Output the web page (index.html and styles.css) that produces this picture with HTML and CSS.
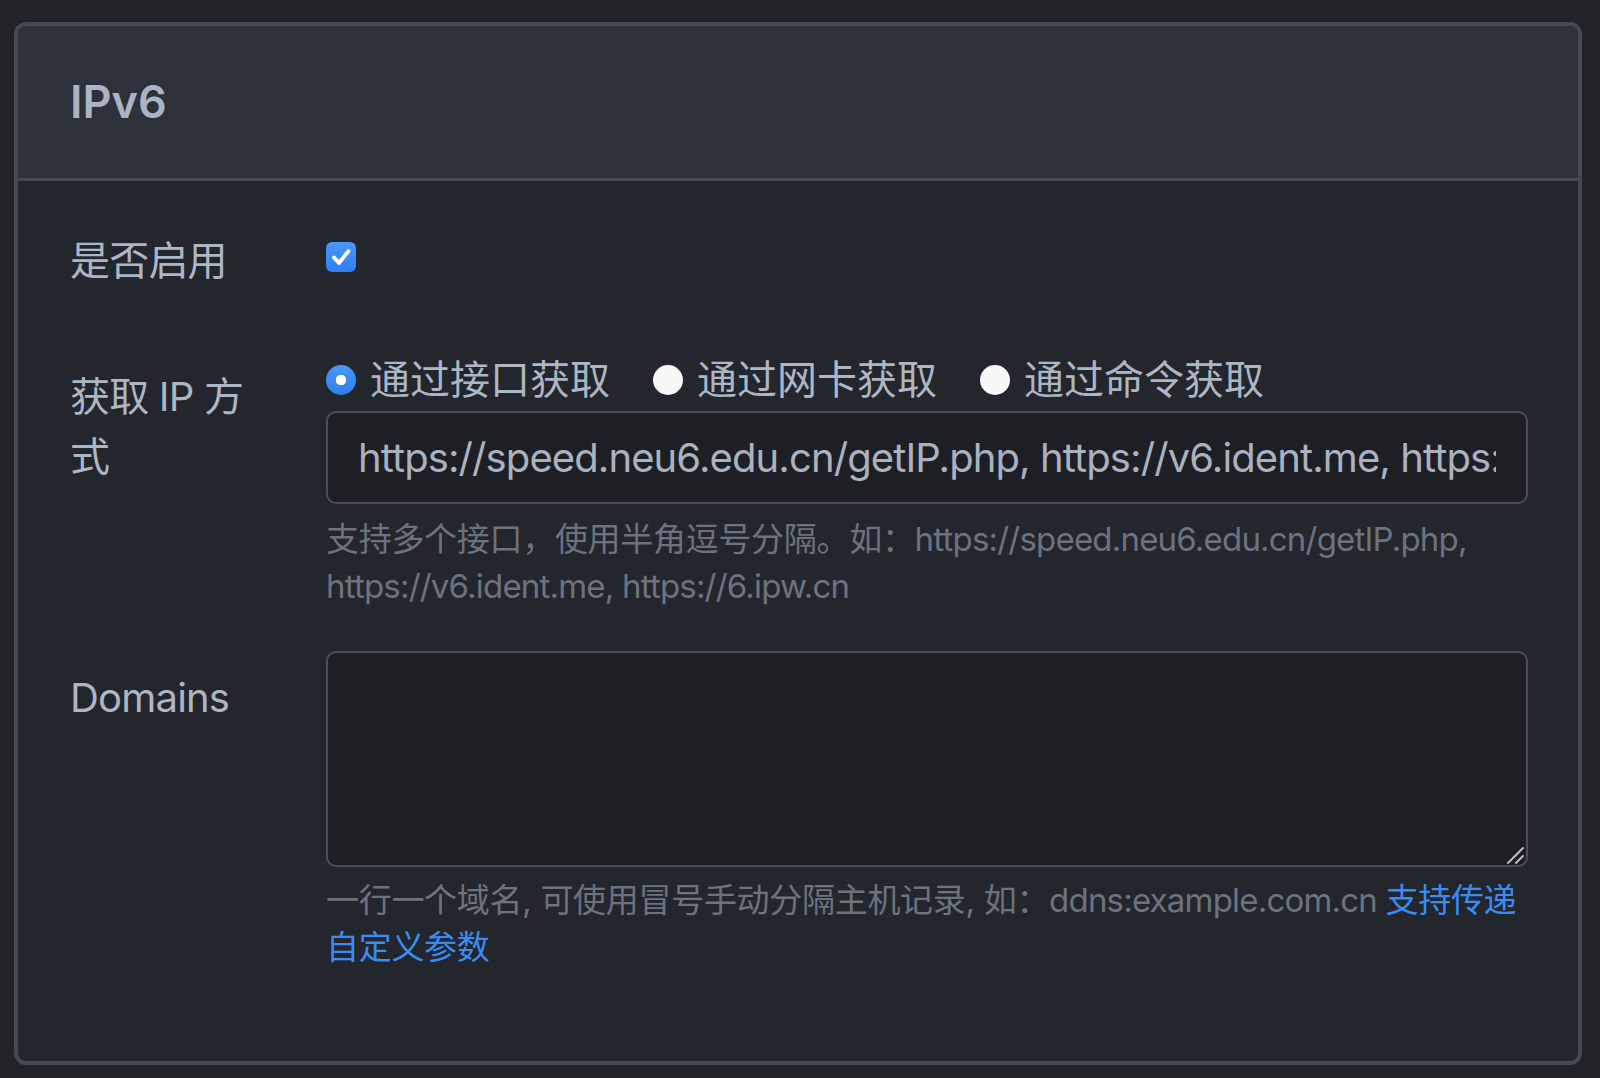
FILE: index.html
```html
<!DOCTYPE html>
<html lang="zh-CN">
<head>
<meta charset="utf-8">
<title>IPv6</title>
<link rel="stylesheet" href="styles.css">
</head>
<body>
<div class="page">
  <div class="card">
    <div class="card-header"><h5 class="card-title">IPv6</h5></div>
    <div class="card-body">
      <div class="row row-enable">
        <label class="col-label">是否启用</label>
        <div class="col-ctrl">
          <span class="checkbox"><svg viewBox="0 0 30 30" width="30" height="30"><path d="M8 15.5 L13 21 L22.5 9" fill="none" stroke="#fff" stroke-width="3.8" stroke-linecap="round" stroke-linejoin="round"/></svg></span>
        </div>
      </div>
      <div class="row row-ip">
        <label class="col-label">获取 IP 方式</label>
        <div class="col-ctrl">
          <div class="radios">
            <label class="radio"><span class="dot checked"></span>通过接口获取</label>
            <label class="radio"><span class="dot"></span>通过网卡获取</label>
            <label class="radio"><span class="dot"></span>通过命令获取</label>
          </div>
          <input class="input" type="text" value="https://speed.neu6.edu.cn/getIP.php, https://v6.ident.me, https://6.ipw.cn">
          <div class="hint"><span class="cjk">支持多个接口，使用半角逗号分隔。如：</span>https://speed.neu6.edu.cn/getIP.php, https://v6.ident.me, https://6.ipw.cn</div>
        </div>
      </div>
      <div class="row row-domains">
        <label class="col-label">Domains</label>
        <div class="col-ctrl">
          <div class="textarea-wrap">
            <textarea class="textarea"></textarea>
            <svg class="grip" viewBox="0 0 20 20" width="20" height="20"><path d="M3 18 L18 3 M11 18 L18 11" stroke="#b9bcc2" stroke-width="2" stroke-linecap="round" fill="none"/></svg>
          </div>
          <div class="hint hint-domains"><span class="cjk">一行一个域名, 可使用冒号手动分隔主机记录, 如：</span>ddns:example.com.cn <a class="link cjk" href="#">支持传递自定义参数</a></div>
        </div>
      </div>
    </div>
  </div>
</div>
</body>
</html>
```

FILE: styles.css
```css
html, body {
  margin: 0;
  padding: 0;
  background: #212329;
}
body {
  font-family: "Inter", "Noto Sans CJK SC", sans-serif;
  font-size: 40px;
  line-height: 1.5;
  color: #adb6c3;
}
.page {
  padding: 22px 18px 13px 14px;
}
.card {
  box-sizing: border-box;
  height: 1043px;
  border: 4px solid #454952;
  border-radius: 12px;
  background: #23262d;
  overflow: hidden;
}
.card-header {
  box-sizing: border-box;
  height: 155px;
  background: #2d3139;
  border-bottom: 3px solid #454952;
  padding-left: 52px;
  display: flex;
  align-items: center;
}
.card-title {
  margin: 0;
  font-size: 45px;
  font-weight: 600;
  line-height: 1.2;
  color: #aab4c2;
}
.card-body {
  padding: 33px 50px 0 52px;
}
.row {
  display: grid;
  grid-template-columns: 200px 1fr;
  column-gap: 56px;
}
.col-label {
  padding-top: 17px;
  line-height: 60px;
  color: #adb6c3;
  letter-spacing: -0.8px;
}
.row-enable .col-ctrl {
  padding-top: 28px;
}
.row-ip {
  margin-top: 59px;
}
.row-domains {
  margin-top: 41px;
}
.checkbox {
  display: block;
  width: 30px;
  height: 30px;
  border-radius: 6px;
  background: linear-gradient(#4a95f8, #2f7ff0);
}
.checkbox svg {
  display: block;
}
.radios {
  display: flex;
  height: 60px;
  align-items: center;
  gap: 43px;
}
.radio {
  display: flex;
  align-items: center;
  gap: 14px;
  color: #adb6c3;
}
.dot {
  box-sizing: border-box;
  width: 30px;
  height: 30px;
  border-radius: 50%;
  background: #f8f8f8;
  flex: none;
}
.dot.checked {
  background: radial-gradient(circle, #ffffff 0 5px, transparent 5.5px), linear-gradient(#4a95f8, #2f7ff0);
}
.input {
  display: block;
  box-sizing: border-box;
  width: 100%;
  height: 93px;
  margin-top: 1px;
  padding: 0 30px;
  border: 2px solid #4a4e57;
  border-radius: 10px;
  background: #1d1f25;
  color: #a9b2be;
  font-family: inherit;
  font-size: 40px;
  letter-spacing: -0.9px;
  outline: none;
}
.textarea-wrap {
  position: relative;
}
.textarea {
  display: block;
  box-sizing: border-box;
  width: 100%;
  height: 216px;
  padding: 15px 30px;
  border: 2px solid #4a4e57;
  border-radius: 10px;
  background: #1d1f25;
  color: #a9b2be;
  font-family: inherit;
  font-size: 40px;
  resize: none;
  outline: none;
}
.grip {
  position: absolute;
  right: 3px;
  bottom: 2px;
}
.hint {
  margin-top: 12px;
  font-size: 33px;
  line-height: 47px;
  letter-spacing: -0.8px;
  color: #6c737d;
}
.hint .cjk {
  letter-spacing: -0.3px;
}
.hint-domains {
  margin-top: 10px;
}
.link {
  color: #3a8cf5;
  text-decoration: none;
}
```
